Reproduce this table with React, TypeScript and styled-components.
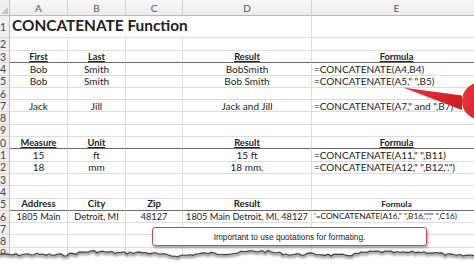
import React from 'react'
import styled, { createGlobalStyle } from 'styled-components'

const GlobalStyle = createGlobalStyle`
  html, body {
    margin: 0;
    padding: 0;
    background: #fff;
  }
  body {
    width: 474px;
    height: 266px;
    overflow: hidden;
  }
`

type CellValue = string | { t: string; size?: number; align?: 'left' | 'center' }

interface RowDef {
    n: number
    title?: string
    cells?: CellValue[]
    bold?: boolean
    under?: boolean
    rule?: boolean
    size?: number
}

const rows: RowDef[] = [
    { n: 1, title: 'CONCATENATE Function' },
    { n: 2 },
    { n: 3, bold: true, under: true, rule: true, size: 9.3, cells: ['First', 'Last', '', 'Result', { t: 'Formula', align: 'center' }] },
    { n: 4, cells: ['Bob', 'Smith', '', 'BobSmith', '=CONCATENATE(A4,B4)'] },
    { n: 5, cells: ['Bob', 'Smith', '', 'Bob Smith', '=CONCATENATE(A5," ",B5)'] },
    { n: 6 },
    { n: 7, cells: ['Jack', 'Jill', '', 'Jack and Jill', '=CONCATENATE(A7," and ",B7)'] },
    { n: 8 },
    { n: 9 },
    { n: 10, bold: true, under: true, rule: true, size: 9.3, cells: ['Measure', 'Unit', '', 'Result', { t: 'Formula', align: 'center' }] },
    { n: 11, cells: ['15', 'ft', '', '15 ft', '=CONCATENATE(A11," ",B11)'] },
    { n: 12, cells: ['18', 'mm', '', '18 mm.', '=CONCATENATE(A12," ",B12,".")'] },
    { n: 13 },
    { n: 14 },
    { n: 15, bold: true, rule: true, size: 9.6, cells: ['Address', 'City', 'Zip', 'Result', { t: 'Formula', align: 'center', size: 8.4 }] },
    { n: 16, size: 9.2, cells: ['1805 Main', 'Detroit, MI', '48127', '1805 Main Detroit, MI, 48127', { t: '\'=CONCATENATE(A16," ",B16,","," ",C16)', size: 8.3 }] },
    { n: 17 },
    { n: 18 },
    { n: 19 },
]

const columns = ['A', 'B', 'C', 'D', 'E']

const Sheet = styled.div`
  position: relative;
  width: 474px;
  height: 266px;
  overflow: hidden;
  background: #fff;
  font-family: Lato, "Liberation Sans", sans-serif;
  color: #222;
`

const Grid = styled.div`
  display: grid;
  grid-template-columns: 10px 58px 58px 57px 129px 170px;
  grid-template-rows: 16px 22px 13px repeat(17, 12.3px);
`

const Corner = styled.div`
  position: relative;
  background: #eeeeee;
  border-right: 1px solid #c6c6c6;
  border-bottom: 1px solid #bcbcbc;

  &::after {
    content: '';
    position: absolute;
    right: 1px;
    bottom: 1px;
    border-left: 7px solid transparent;
    border-bottom: 7px solid #c4c4c4;
  }
`

const ColHead = styled.div`
  display: flex;
  align-items: center;
  justify-content: center;
  background: linear-gradient(#f6f6f6, #ececec);
  border-right: 1px solid #d2d2d2;
  border-bottom: 1px solid #b8b8b8;
  color: #555;
  font-size: 10px;
`

const RowHead = styled.div`
  display: flex;
  align-items: center;
  justify-content: flex-end;
  overflow: hidden;
  padding-right: 3px;
  background: #efefef;
  border-right: 1px solid #bdbdbd;
  border-bottom: 1px solid #d8d8d8;
  color: #444;
  font-size: 10.5px;
  white-space: nowrap;
`

const Cell = styled.div<{ $align: string; $bold?: boolean; $under?: boolean; $rule?: boolean; $size: number; $span?: number }>`
  display: flex;
  align-items: center;
  justify-content: ${p => (p.$align === 'left' ? 'flex-start' : 'center')};
  grid-column: span ${p => p.$span ?? 1};
  padding: 0 2px;
  border-right: 1px solid #dcdcdc;
  border-bottom: 1px solid ${p => (p.$rule ? '#6a6a6a' : '#dcdcdc')};
  font-size: ${p => p.$size}px;
  font-weight: ${p => (p.$bold ? 700 : 400)};
  text-decoration: ${p => (p.$under ? 'underline' : 'none')};
  text-underline-offset: 1px;
  white-space: nowrap;
  line-height: 1;
  min-width: 0;
`

const Title = styled(Cell)`
  font-size: 15.4px;
  font-weight: 700;
  align-items: flex-end;
  padding: 0 0 4px 2px;
`

const Callout = styled.div`
  position: absolute;
  left: 152px;
  top: 227px;
  width: 275px;
  height: 19px;
  box-sizing: border-box;
  display: flex;
  align-items: center;
  justify-content: center;
  background: #fff;
  border: 1.5px solid #c44a50;
  border-radius: 3px;
  box-shadow: 1px 2px 3px rgba(0, 0, 0, 0.35);
  font-family: "Liberation Sans", Arial, sans-serif;
  font-size: 8.3px;
  color: #222;
`

const Overlay = styled.svg`
  position: absolute;
  left: 0;
  top: 0;
  pointer-events: none;
`

// deterministic jagged edge for the torn paper
function tornPoints() {
    let seed = 7
    const rnd = () => {
        seed = (seed * 9301 + 49297) % 233280
        return seed / 233280
    }
    const pts: string[] = []
    for (let x = -2; x <= 478; x += 3) {
        const wave = Math.sin(x / 23) * 1.6 + Math.sin(x / 9 + 1) * 0.8
        const y = 253.5 + wave + (rnd() - 0.5) * 2.6
        pts.push(`${x},${y.toFixed(1)}`)
    }
    return pts
}

const Torn = () => {
    const pts = tornPoints()
    const line = 'M' + pts.join(' L')
    const fill = line + ' L478,270 L-2,270 Z'
    return (
        <Overlay width={474} height={266}>
            <defs>
                <filter id="soft" x="-5%" y="-50%" width="110%" height="200%">
                    <feGaussianBlur stdDeviation="1.3" />
                </filter>
            </defs>
            <path d={fill} fill="#fff" />
            <path d={line} transform="translate(0,1.5)" fill="none" stroke="#777" strokeWidth={3} opacity={0.7} filter="url(#soft)" />
            <path d={line} fill="none" stroke="#3c3c3c" strokeWidth={1.1} />
        </Overlay>
    )
}

const Arrow = () => (
    <Overlay width={474} height={266}>
        <defs>
            <linearGradient id="red" x1="0" y1="0" x2="1" y2="0.3">
                <stop offset="0" stopColor="#e8383c" />
                <stop offset="1" stopColor="#d01f25" />
            </linearGradient>
        </defs>
        <path d="M403 87.6 L462 95.5 L462 110 Z" fill="url(#red)" />
        <ellipse cx={479} cy={101} rx={17} ry={18} fill="url(#red)" />
    </Overlay>
)

const renderCell = (row: RowDef, value: CellValue, i: number) => {
    const v = typeof value === 'string' ? { t: value } : value
    const align = v.align ?? (i === 4 ? 'left' : 'center')
    const size = v.size ?? row.size ?? 10
    return (
        <Cell key={i} $align={align} $bold={row.bold} $under={row.under} $rule={row.rule} $size={size}>
            {v.t}
        </Cell>
    )
}

export default function App() {
    return (
        <Sheet>
            <GlobalStyle />
            <Grid>
                <Corner />
                {columns.map(c => (
                    <ColHead key={c}>{c}</ColHead>
                ))}
                {rows.map(row => (
                    <React.Fragment key={row.n}>
                        <RowHead>{row.n}</RowHead>
                        {row.title ? (
                            <>
                                <Title $align="left" $size={15.4} $span={4}>{row.title}</Title>
                                <Cell $align="left" $size={10} />
                            </>
                        ) : (
                            (row.cells ?? ['', '', '', '', '']).map((v, i) => renderCell(row, v, i))
                        )}
                    </React.Fragment>
                ))}
            </Grid>
            <Arrow />
            <Callout>Important to use quotations for formating.</Callout>
            <Torn />
        </Sheet>
    )
}
